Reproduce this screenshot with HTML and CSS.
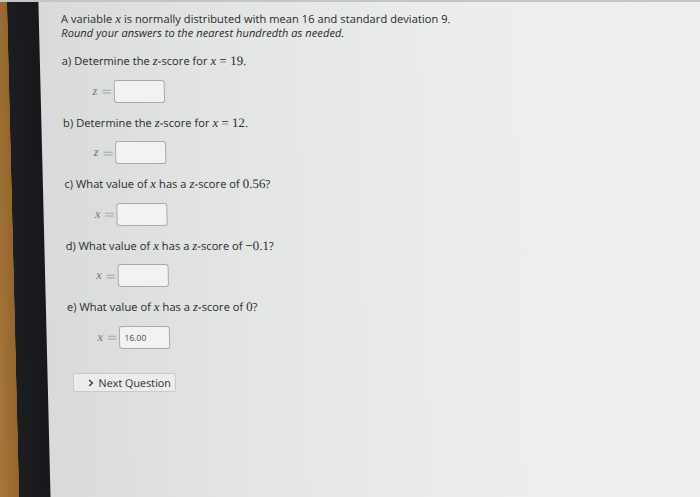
FILE: index.html
```html
<!DOCTYPE html>
<html>
<head>
<meta charset="utf-8">
<link rel="stylesheet" href="styles.css">
</head>
<body>
<div class="page">
  <div class="content">
    <p class="intro">A variable <i class="m">x</i> is normally distributed with mean 16 and standard deviation 9.<br><em>Round your answers to the nearest hundredth as needed.</em></p>

    <div class="part">
      <p class="q">a) Determine the <i class="m">z</i>-score for <span class="m"><i>x</i> = 19</span>.</p>
      <div class="ans"><span class="lbl">z</span><span class="eq">=</span><span class="box"></span></div>
    </div>

    <div class="part">
      <p class="q">b) Determine the <i class="m">z</i>-score for <span class="m"><i>x</i> = 12</span>.</p>
      <div class="ans"><span class="lbl">z</span><span class="eq">=</span><span class="box"></span></div>
    </div>

    <div class="part">
      <p class="q">c) What value of <i class="m">x</i> has a <i class="m">z</i>-score of <span class="m">0.56</span>?</p>
      <div class="ans"><span class="lbl">x</span><span class="eq">=</span><span class="box"></span></div>
    </div>

    <div class="part">
      <p class="q">d) What value of <i class="m">x</i> has a <i class="m">z</i>-score of <span class="m">&minus;0.1</span>?</p>
      <div class="ans"><span class="lbl">x</span><span class="eq">=</span><span class="box"></span></div>
    </div>

    <div class="part">
      <p class="q">e) What value of <i class="m">x</i> has a <i class="m">z</i>-score of <span class="m">0</span>?</p>
      <div class="ans"><span class="lbl">x</span><span class="eq">=</span><span class="box filled">16.00</span></div>
    </div>

    <button class="next"><svg class="chev" width="6" height="8" viewBox="0 0 6 8"><path d="M1.2 1 L4.4 4 L1.2 7" fill="none" stroke="#333" stroke-width="1.3"/></svg>Next Question</button>
  </div>
</div>
</body>
</html>
```

FILE: styles.css
```css
html, body {
  margin: 0;
  padding: 0;
}
body {
  width: 700px;
  height: 497px;
  overflow: hidden;
}
.page {
  width: 700px;
  height: 497px;
  box-sizing: border-box;
  border-top: 2px solid #c4c6c5;
  background:
    linear-gradient(88.6deg,
      #a8773a 0px, #93662f 19px,
      #1b1d21 19.5px, #16181c 50px,
      #d9dbda 51px, #e4e6e5 250px, #eceded 480px, #efefef 700px);
  font-family: "Open Sans", Lato, "Liberation Sans", sans-serif;
  color: #2b2c2d;
  font-size: 11.2px;
}
.content {
  padding: 10px 0 0 60.5px;
  transform: skewX(1.2deg);
  transform-origin: 0 0;
}
p {
  margin: 0;
}
.intro {
  line-height: 14px;
}
.intro em {
  font-style: italic;
}
.part {
  margin-top: 14px;
}
.part + .part {
  margin-top: 12.5px;
}
.q {
  line-height: 14px;
}
.m {
  font-family: "Liberation Serif", "DejaVu Serif", serif;
  font-size: 13px;
}
i.m, .m i {
  font-style: italic;
}
.ans {
  display: flex;
  align-items: center;
  height: 24px;
  margin-top: 11px;
  margin-left: 30px;
}
.lbl {
  width: 8px;
  font-family: "Liberation Serif", "DejaVu Serif", serif;
  font-style: italic;
  font-size: 12.5px;
  color: #6f7173;
}
.eq {
  width: 13px;
  text-align: center;
  font-family: "DejaVu Sans", "Liberation Serif", serif;
  font-size: 14px;
  color: #a9abac;
}
.box {
  display: flex;
  align-items: center;
  box-sizing: border-box;
  width: 51px;
  height: 23px;
  border: 1px solid #a9abaa;
  border-radius: 3px;
  background: #f1f2f1;
  font-size: 8.5px;
  color: #4a4b4c;
  padding-left: 5px;
}
.next {
  display: flex;
  align-items: center;
  margin-top: 24px;
  margin-left: 4px;
  width: 103px;
  height: 19px;
  box-sizing: border-box;
  padding: 0 0 0 14px;
  border: 1px solid #c9cbca;
  border-radius: 2px;
  background: #ebeceb;
  font-family: "Open Sans", Lato, "Liberation Sans", sans-serif;
  font-size: 10.8px;
  color: #2b2c2d;
}
.chev {
  margin-right: 5px;
}
```
